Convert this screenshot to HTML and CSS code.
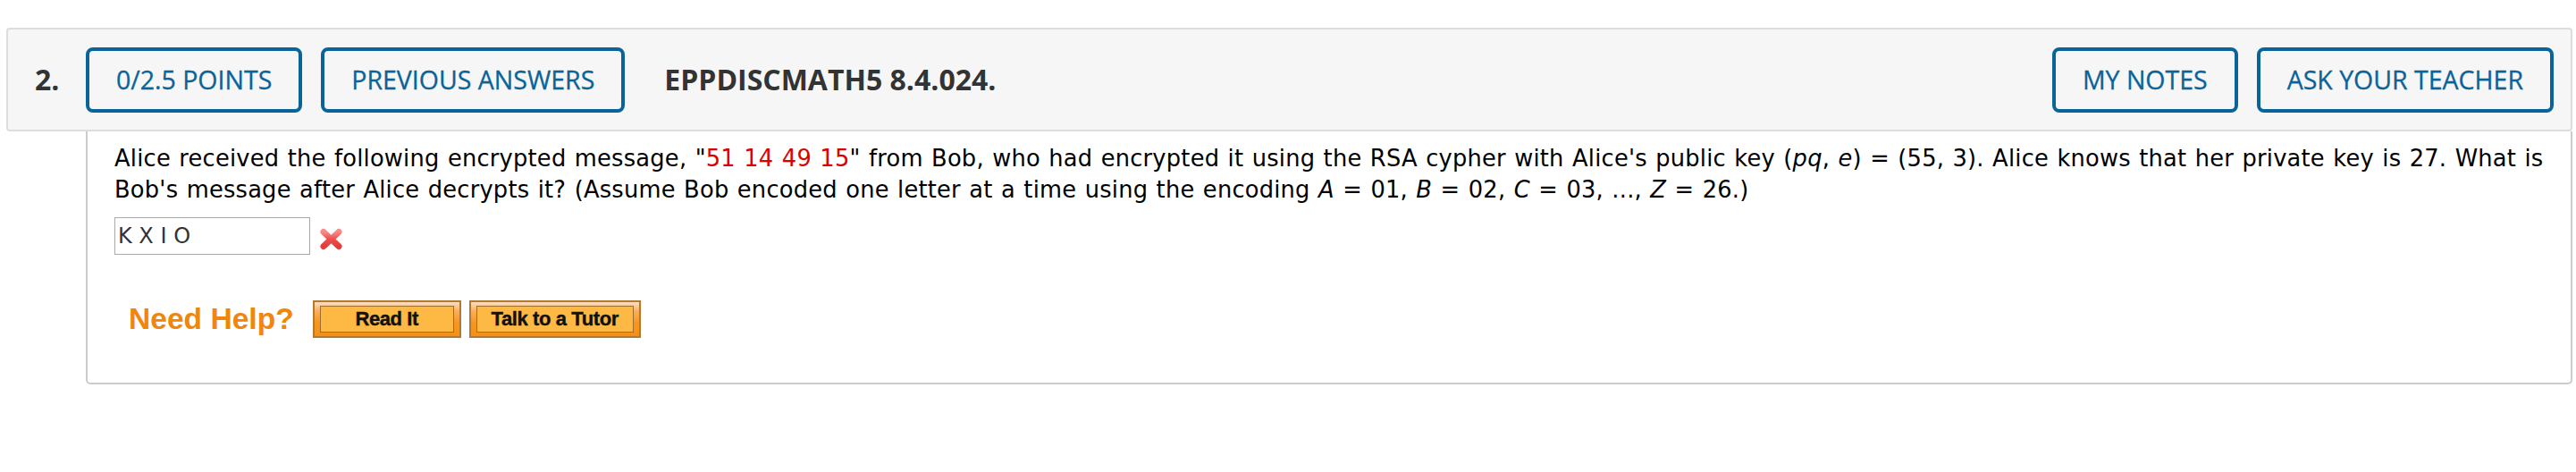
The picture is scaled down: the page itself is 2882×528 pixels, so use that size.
FILE: index.html
```html
<!DOCTYPE html>
<html lang="en">
<head>
<meta charset="utf-8">
<title>Question 2</title>
<link rel="stylesheet" href="styles.css">
</head>
<body>
<div class="page">
  <div class="q-header">
    <span class="q-num">2.</span>
    <a class="q-btn">0/2.5 POINTS</a>
    <a class="q-btn">PREVIOUS ANSWERS</a>
    <span class="q-title">EPPDISCMATH5 8.4.024.</span>
    <span class="q-spacer"></span>
    <a class="q-btn">MY NOTES</a>
    <a class="q-btn">ASK YOUR TEACHER</a>
  </div>
  <div class="q-body">
    <p class="q-text">Alice received the following encrypted message, "<span class="red">51 14 49 15</span>" from Bob, who had encrypted it using the RSA cypher with Alice's public key (<i>pq</i>, <i>e</i>) = (55, 3). Alice knows that her private key is 27. What is Bob's message after Alice decrypts it? (Assume Bob encoded one letter at a time using the encoding <i>A</i> = 01, <i>B</i> = 02, <i>C</i> = 03, ..., <i>Z</i> = 26.)</p>
    <div class="answer-row">
      <div class="answer-box">K X I O</div>
      <svg class="wrong" width="27" height="25" viewBox="0 0 27 25" aria-label="incorrect">
        <defs>
          <linearGradient id="xg" x1="0" y1="0" x2="0" y2="1">
            <stop offset="0" stop-color="#f98a8a"/>
            <stop offset="0.5" stop-color="#ee4e4e"/>
            <stop offset="1" stop-color="#e23c3c"/>
          </linearGradient>
        </defs>
        <path d="M5 4.5 L22 20.5 M22 4.5 L5 20.5" stroke="url(#xg)" stroke-width="7" stroke-linecap="round" fill="none"/>
      </svg>
    </div>
    <div class="help-row">
      <span class="need-help">Need Help?</span>
      <a class="hbtn read"><span>Read It</span></a>
      <a class="hbtn tutor"><span>Talk to a Tutor</span></a>
    </div>
  </div>
</div>
</body>
</html>
```

FILE: styles.css
```css
html, body {
  margin: 0;
  padding: 0;
  background: #ffffff;
}

.page {
  padding: 31px 4px 0 7px;
}

.q-header {
  display: flex;
  align-items: center;
  box-sizing: border-box;
  height: 116px;
  padding: 0 19px 0 30px;
  background: #f6f6f6;
  border: 2px solid #dddddd;
  border-radius: 4px;
  font-family: "Open Sans", "Liberation Sans", sans-serif;
  line-height: 1.2;
}

.q-num {
  width: 57px;
  flex: none;
  font-size: 32px;
  font-weight: 700;
  color: #333333;
}

.q-btn {
  display: flex;
  align-items: center;
  box-sizing: border-box;
  height: 73px;
  padding: 0 30px;
  border: 4px solid #0a6399;
  border-radius: 8px;
  color: #0a6399;
  font-size: 28.5px;
  font-weight: 400;
  -webkit-text-stroke: 0.3px #0a6399;
  margin-right: 21px;
  flex: none;
}

.q-btn:last-child {
  margin-right: 0;
}

.q-title {
  margin-left: 23px;
  font-size: 32px;
  font-weight: 700;
  color: #333333;
}

.q-spacer {
  flex: 1;
}

.q-body {
  margin-left: 89px;
  border: 2px solid #cccccc;
  border-top: 0;
  border-radius: 0 0 5px 5px;
  padding: 13px 20px 50px 30px;
  font-family: "DejaVu Sans", Verdana, sans-serif;
  color: #000000;
}

.q-text {
  margin: 0;
  font-size: 25.7px;
  line-height: 35px;
  letter-spacing: 0.23px;
  word-spacing: 1px;
}

.red {
  color: #dd0000;
}

.answer-row {
  display: flex;
  align-items: center;
  margin-top: 13px;
}

.answer-box {
  box-sizing: border-box;
  width: 219px;
  height: 42px;
  border: 1px solid #a9a9a9;
  padding: 0 3px;
  font-size: 24px;
  line-height: 40px;
  color: #333333;
}

.wrong {
  margin-left: 10px;
  margin-top: 6px;
}

.help-row {
  display: flex;
  align-items: center;
  height: 42px;
  margin-top: 51px;
  font-family: "Liberation Sans", Arial, sans-serif;
}

.need-help {
  margin-left: 16px;
  margin-right: 21px;
  font-size: 33.6px;
  font-weight: 700;
  color: #f0860e;
}

.hbtn {
  display: flex;
  box-sizing: border-box;
  height: 42px;
  padding: 4px 6px;
  border: 2px solid #b5782f;
  background: linear-gradient(to bottom, #fde0c2 0%, #fab060 25%, #f7961f 60%, #f39018 100%);
  margin-right: 9px;
}

.hbtn span {
  flex: 1;
  display: flex;
  align-items: center;
  justify-content: center;
  border: 1px solid #9e6e30;
  background: #fdb944;
  font-size: 22px;
  font-weight: 700;
  color: #111111;
  letter-spacing: -0.4px;
  -webkit-text-stroke: 0.4px #111111;
}

.hbtn.read {
  width: 166px;
}

.hbtn.tutor {
  width: 192px;
}
```
